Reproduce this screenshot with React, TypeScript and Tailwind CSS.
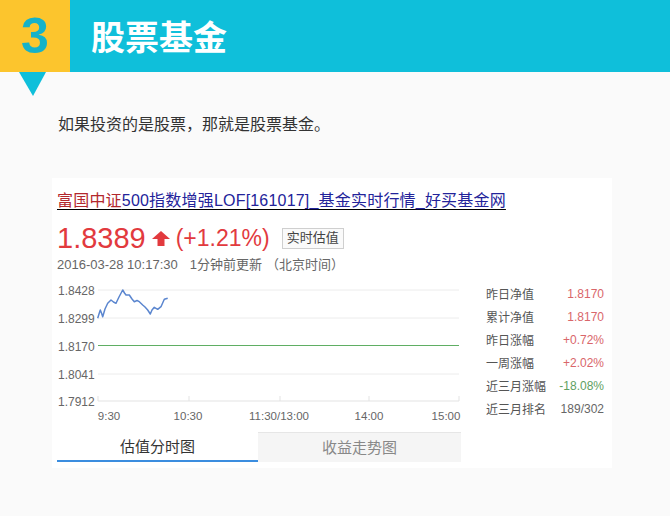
const sans = "font-['Liberation_Sans','Noto_Sans_CJK_SC',sans-serif]";
const cjk = "font-['Noto_Sans_CJK_SC','Liberation_Sans',sans-serif]";

const stats = [
  { label: "昨日净值", value: "1.8170", color: "text-[#d9666a]" },
  { label: "累计净值", value: "1.8170", color: "text-[#d9666a]" },
  { label: "昨日涨幅", value: "+0.72%", color: "text-[#d9666a]" },
  { label: "一周涨幅", value: "+2.02%", color: "text-[#d9666a]" },
  { label: "近三月涨幅", value: "-18.08%", color: "text-[#5f9f62]" },
  { label: "近三月排名", value: "189/302", color: "text-[#666]" },
];

const yLabels = [
  { v: "1.8428", y: 12 },
  { v: "1.8299", y: 40 },
  { v: "1.8170", y: 68 },
  { v: "1.8041", y: 96 },
  { v: "1.7912", y: 123 },
];

const xLabels = [
  { t: "9:30", x: 52 },
  { t: "10:30", x: 131 },
  { t: "11:30/13:00", x: 222 },
  { t: "14:00", x: 312 },
  { t: "15:00", x: 389 },
];

const line =
  "40.7,40.3 42,36 43.3,32 44.5,35 45.7,38.7 48,31 50.7,25.3 54,22 56.5,24 59,25.3 62,19 65.7,12 67.5,15 69,17 72.3,17 75,21 77.3,23.7 80,22.5 82.3,23.7 85.7,27 88,29 90.7,32 93.3,36 95,32 97.3,29.3 100.7,31.3 104,28.7 107.3,21.3 110.7,20.3";

function Chart() {
  return (
    <svg width="404" height="154" className={sans}>
      {[12, 40, 96].map((y) => (
        <line key={y} x1="41" x2="402" y1={y} y2={y} stroke="#ececec" strokeWidth="1" />
      ))}
      <line x1="41" x2="402" y1="123" y2="123" stroke="#e3e3e3" strokeWidth="1" />
      {[41, 132, 223, 312, 402].map((x) => (
        <line key={x} x1={x} x2={x} y1="118" y2="123" stroke="#e3e3e3" strokeWidth="1" />
      ))}
      <line x1="41" x2="402" y1="67.5" y2="67.5" stroke="#5fae63" strokeWidth="1" />
      <polyline points={line} fill="none" stroke="#5b86cf" strokeWidth="1.5" strokeLinejoin="round" />
      {yLabels.map((l) => (
        <text key={l.v} x="1" y={l.y + 4.5} fontSize="12" fill="#666">
          {l.v}
        </text>
      ))}
      {xLabels.map((l) => (
        <text key={l.t} x={l.x} y="142" fontSize="11.5" fill="#666" textAnchor="middle">
          {l.t}
        </text>
      ))}
    </svg>
  );
}

export default function App() {
  return (
    <div className={`relative w-[670px] h-[516px] bg-[#fafafa] overflow-hidden ${cjk}`}>
      {/* header bar */}
      <div className="flex h-[72px]">
        <div className="w-[70px] bg-[#fcc52d] flex items-center justify-center">
          <span className={`text-[50px] font-bold leading-none text-[#15b2c9] ${sans}`}>3</span>
        </div>
        <div className="flex-1 bg-[#0fbfda] flex items-center pl-[21px]">
          <span className="text-[34px] font-bold text-white leading-none">股票基金</span>
        </div>
      </div>
      <div className="absolute left-[19px] top-[72px] w-0 h-0 border-l-[14px] border-r-[13px] border-t-[24px] border-l-transparent border-r-transparent border-t-[#0fbfda]" />

      <p className="mt-[39px] pl-[58px] text-[16px] leading-[24px] text-[#333]">
        如果投资的是股票，那就是股票基金。
      </p>

      {/* screenshot panel */}
      <div className="mt-[43px] ml-[52px] w-[560px] h-[290px] bg-white pl-[5px] pt-[11px]">
        <div className={`text-[16px] leading-[24px] tracking-[0.2px] underline underline-offset-[3px] ${sans}`}>
          <span className="text-[#b3282d]">富国中证</span>
          <span className="text-[#23239a]">500指数增强LOF[161017]_基金实时行情_好买基金网</span>
        </div>

        <div className={`mt-[8px] flex items-center h-[34px] text-[#e23a3e] ${sans}`}>
          <span className="text-[29px] leading-none">1.8389</span>
          <svg width="18" height="15" viewBox="0 0 18 15" className="ml-[6px]">
            <path d="M9 0 L18 8 L12.5 8 L12.5 15 L5.5 15 L5.5 8 L0 8 Z" fill="#e23a3e" />
          </svg>
          <span className="ml-[6px] text-[23px] leading-none">(+1.21%)</span>
          <span className="ml-[12px] border border-[#cfcfcf] bg-[#fafafa] px-[4px] h-[21px] flex items-center text-[13px] text-[#444]">
            实时估值
          </span>
        </div>

        <div className={`mt-[1px] flex items-center h-[18px] text-[13px] text-[#666] ${sans}`}>
          <span>2016-03-28 10:17:30</span>
          <span className="ml-[12px]">1分钟前更新</span>
          <span className="ml-[4px]">（北京时间）</span>
        </div>

        <div className="mt-[4px] flex">
          <div className="w-[404px]">
            <Chart />
            <div className="flex h-[30px] text-[15px]">
              <div className="w-[201px] flex items-center justify-center text-[#333] border-b-2 border-[#3b8ddf]">
                估值分时图
              </div>
              <div className="flex-1 flex items-center justify-center text-[#888] bg-[#f5f5f5] border-t border-[#e6e6e6]">
                收益走势图
              </div>
            </div>
          </div>

          <div className="ml-[25px] w-[118px] pt-[4px]">
            {stats.map((s) => (
              <div key={s.label} className="flex justify-between items-center h-[23px] text-[12px]">
                <span className="text-[#555]">{s.label}</span>
                <span className={`${s.color} ${sans}`}>{s.value}</span>
              </div>
            ))}
          </div>
        </div>
      </div>
    </div>
  );
}
